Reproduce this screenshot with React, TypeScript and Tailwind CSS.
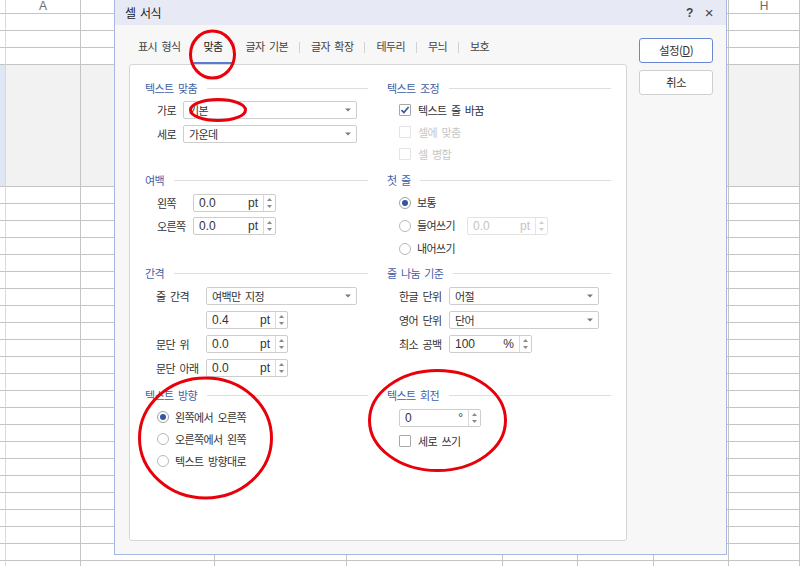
import React from "react";

type Row = { kind: "head" | "norm" | "gray" };

const rows: Row[] = [
  { kind: "head" },
  { kind: "norm" },
  { kind: "norm" },
  { kind: "norm" },
  { kind: "gray" },
  ...Array.from({ length: 23 }, () => ({ kind: "norm" as const })),
];

function Sheet() {
  return (
    <div className="flex flex-col">
      {rows.map((r, i) => (
        <div
          key={i}
          className={
            r.kind === "head"
              ? "grid grid-cols-[6px_75px_134px_132px_156px_75px_76px_75px_71px] h-[14px] shrink-0"
              : r.kind === "gray"
              ? "grid grid-cols-[6px_75px_134px_132px_156px_75px_76px_75px_71px] h-[122px] shrink-0"
              : "grid grid-cols-[6px_75px_134px_132px_156px_75px_76px_75px_71px] h-[17px] shrink-0"
          }
        >
          {Array.from({ length: 9 }, (_, c) => (
            <div
              key={c}
              className={
                (c === 0
                  ? "border-r border-b border-r-[#d9d9d9] border-b-[#c4c4c4] "
                  : "border-r border-b border-[#c4c4c4] ") +
                (r.kind === "gray"
                  ? c === 0
                    ? "bg-[#dfe6f6]"
                    : "bg-[#f2f2f2]"
                  : "bg-white") +
                " flex items-center justify-center"
              }
            >
              {r.kind === "head" && c === 1 && (
                <span className="text-[12px] leading-[13px] text-[#6b6b6b] tracking-normal [font-family:'Liberation_Sans',sans-serif]">
                  A
                </span>
              )}
              {r.kind === "head" && c === 8 && (
                <span className="text-[12px] leading-[13px] text-[#6b6b6b] tracking-normal [font-family:'Liberation_Sans',sans-serif]">
                  H
                </span>
              )}
            </div>
          ))}
        </div>
      ))}
    </div>
  );
}

function Caret() {
  return (
    <svg width="6" height="4" viewBox="0 0 6 4">
      <path d="M0 0.5h6L3 3.5z" fill="#7a7a7a" />
    </svg>
  );
}

function Select({ className, value }: { className: string; value: string }) {
  return (
    <div
      className={
        "h-[18px] border border-[#cdcdcd] rounded-[2px] bg-white flex items-center justify-between pl-[5px] pr-[5px] " +
        className
      }
    >
      <span className="text-[#333]">{value}</span>
      <Caret />
    </div>
  );
}

function Spin({
  className,
  value,
  unit,
  disabled,
}: {
  className: string;
  value: string;
  unit: string;
  disabled?: boolean;
}) {
  const col = disabled ? "#cfcfcf" : "#8a8a8a";
  return (
    <div
      className={
        (disabled ? "border-[#e3e3e3] " : "border-[#cdcdcd] ") +
        "flex h-[18px] border rounded-[2px] bg-white " +
        className
      }
    >
      <div
        className={
          (disabled ? "text-[#c4c4c4] " : "text-[#333] ") +
          "flex-1 flex items-center justify-between pl-[5px] pr-[5px] text-[12px] [font-family:'Liberation_Sans',sans-serif] tracking-normal"
        }
      >
        <span>{value}</span>
        <span>{unit}</span>
      </div>
      <div
        className={
          (disabled ? "border-[#e6e6e6] " : "border-[#dadada] ") +
          "w-[12px] border-l flex flex-col items-center justify-center gap-[4px]"
        }
      >
        <svg width="5" height="3" viewBox="0 0 5 3">
          <path d="M0 3h5L2.5 0z" fill={col} />
        </svg>
        <svg width="5" height="3" viewBox="0 0 5 3">
          <path d="M0 0h5L2.5 3z" fill={col} />
        </svg>
      </div>
    </div>
  );
}

function Header({ title }: { title: string }) {
  return (
    <div className="h-[16px] flex items-center">
      <span className="text-[#3f5ea8]">{title}</span>
      <div className="flex-1 h-px bg-[#dedede] ml-[10px]" />
    </div>
  );
}

function Check({ checked, disabled, label }: { checked?: boolean; disabled?: boolean; label: string }) {
  return (
    <div className="h-[22px] flex items-center pl-[12px]">
      <div
        className={
          (disabled ? "border-[#e4e4e4] " : "border-[#a8a8a8] ") +
          "w-[12px] h-[12px] border rounded-[1px] bg-white flex items-center justify-center"
        }
      >
        {checked && (
          <svg width="10" height="10" viewBox="0 0 10 10">
            <path d="M1.5 5.2l2.4 2.4L8.6 2" stroke="#3656a8" strokeWidth="1.7" fill="none" />
          </svg>
        )}
      </div>
      <span className={(disabled ? "text-[#c6c6c6] " : "text-[#333] ") + "ml-[7px]"}>{label}</span>
    </div>
  );
}

function Radio({ checked, label, children }: { checked?: boolean; label: string; children?: React.ReactNode }) {
  return (
    <div className="h-[23px] flex items-center pl-[12px]">
      <div
        className={
          (checked ? "border-[#a0a0a0] " : "border-[#b9b9b9] ") +
          "w-[12px] h-[12px] border rounded-full bg-white flex items-center justify-center"
        }
      >
        {checked && <div className="w-[6px] h-[6px] rounded-full bg-[#3554a4]" />}
      </div>
      <span className="ml-[6px] text-[#333]">{label}</span>
      {children}
    </div>
  );
}

function Label({ className, text }: { className: string; text: string }) {
  return <span className={"text-[#333] " + className}>{text}</span>;
}

const tabs = ["표시 형식", "맞춤", "글자 기본", "글자 확장", "테두리", "무늬", "보호"];

function Dialog() {
  return (
    <div className="absolute left-[114px] top-0 w-[613px] h-[555px] border border-[#a9b8e2] border-t-0 bg-[#f7f7f7] flex flex-col">
      <div className="h-[25px] bg-[#e7e9f5] flex items-center pl-[10px] pr-[13px] shrink-0">
        <span className="text-[12px] text-[#222]">셀 서식</span>
        <div className="flex-1" />
        <span className="text-[12px] font-bold text-[#444] [font-family:'Liberation_Sans',sans-serif]">?</span>
        <span className="ml-[12px] text-[15px] leading-none text-[#444] [font-family:'Liberation_Sans',sans-serif]">×</span>
      </div>
      <div className="flex">
        <div className="ml-[14px] w-[498px] flex flex-col">
          <div className="mt-[10px] h-[29px] flex items-stretch -ml-[2px]">
            {tabs.map((t, i) => (
              <React.Fragment key={t}>
                {i > 0 && <div className="w-px h-[11px] bg-[#d2d2d2] self-center -mt-[4px]" />}
                <div
                  className={
                    (i === 1
                      ? "border-b-2 border-[#5b7ad2] text-[#222] "
                      : "border-b-2 border-transparent text-[#444] ") +
                    "px-[11px] pb-[4px] flex items-center"
                  }
                >
                  {t}
                </div>
              </React.Fragment>
            ))}
          </div>
          <div className="h-[477px] border border-[#d6d6d6] rounded-[3px] bg-white pt-[15px] pl-[15px]">
            {/* block 1 */}
            <div className="grid grid-cols-[223px_224px] gap-x-[19px] h-[92px]">
              <div className="flex flex-col">
                <Header title="텍스트 맞춤" />
                <div className="mt-[5px] flex items-center pl-[12px]">
                  <Label className="w-[26px]" text="가로" />
                  <Select className="w-[174px]" value="기본" />
                </div>
                <div className="mt-[6px] flex items-center pl-[12px]">
                  <Label className="w-[26px]" text="세로" />
                  <Select className="w-[174px]" value="가운데" />
                </div>
              </div>
              <div className="flex flex-col">
                <Header title="텍스트 조정" />
                <div className="mt-[3px]" />
                <Check checked label="텍스트 줄 바꿈" />
                <Check disabled label="셀에 맞춤" />
                <Check disabled label="셀 병합" />
              </div>
            </div>
            {/* block 2 */}
            <div className="grid grid-cols-[223px_224px] gap-x-[19px] h-[93px]">
              <div className="flex flex-col">
                <Header title="여백" />
                <div className="mt-[6px] flex items-center pl-[12px]">
                  <Label className="w-[36px]" text="왼쪽" />
                  <Spin className="w-[83px]" value="0.0" unit="pt" />
                </div>
                <div className="mt-[5px] flex items-center pl-[12px]">
                  <Label className="w-[36px]" text="오른쪽" />
                  <Spin className="w-[83px]" value="0.0" unit="pt" />
                </div>
              </div>
              <div className="flex flex-col">
                <Header title="첫 줄" />
                <div className="mt-[3px]" />
                <Radio checked label="보통" />
                <Radio label="들여쓰기">
                  <div className="ml-auto mr-[63px]">
                    <Spin className="w-[81px]" value="0.0" unit="pt" disabled />
                  </div>
                </Radio>
                <Radio label="내어쓰기" />
              </div>
            </div>
            {/* block 3 */}
            <div className="grid grid-cols-[223px_224px] gap-x-[19px] h-[122px]">
              <div className="flex flex-col">
                <Header title="간격" />
                <div className="mt-[6px] flex items-center pl-[11px]">
                  <Label className="w-[50px]" text="줄 간격" />
                  <Select className="w-[151px]" value="여백만 지정" />
                </div>
                <div className="mt-[6px] flex items-center pl-[61px]">
                  <Spin className="w-[82px]" value="0.4" unit="pt" />
                </div>
                <div className="mt-[6px] flex items-center pl-[11px]">
                  <Label className="w-[50px]" text="문단 위" />
                  <Spin className="w-[82px]" value="0.0" unit="pt" />
                </div>
                <div className="mt-[6px] flex items-center pl-[11px]">
                  <Label className="w-[50px] whitespace-nowrap" text="문단 아래" />
                  <Spin className="w-[82px]" value="0.0" unit="pt" />
                </div>
              </div>
              <div className="flex flex-col">
                <Header title="줄 나눔 기준" />
                <div className="mt-[6px] flex items-center pl-[12px]">
                  <Label className="w-[50px]" text="한글 단위" />
                  <Select className="w-[150px]" value="어절" />
                </div>
                <div className="mt-[6px] flex items-center pl-[12px]">
                  <Label className="w-[50px]" text="영어 단위" />
                  <Select className="w-[150px]" value="단어" />
                </div>
                <div className="mt-[6px] flex items-center pl-[12px]">
                  <Label className="w-[50px]" text="최소 공백" />
                  <Spin className="w-[83px]" value="100" unit="%" />
                </div>
              </div>
            </div>
            {/* block 4 */}
            <div className="grid grid-cols-[223px_224px] gap-x-[19px]">
              <div className="flex flex-col">
                <Header title="텍스트 방향" />
                <div className="mt-[3px]" />
                <div className="flex flex-col [&>div]:h-[22px]">
                  <Radio checked label="왼쪽에서 오른쪽" />
                  <Radio label="오른쪽에서 왼쪽" />
                  <Radio label="텍스트 방향대로" />
                </div>
              </div>
              <div className="flex flex-col">
                <Header title="텍스트 회전" />
                <div className="mt-[6px] pl-[12px]">
                  <Spin className="w-[82px]" value="0" unit="°" />
                </div>
                <div className="mt-[3px]" />
                <Check label="세로 쓰기" />
              </div>
            </div>
          </div>
        </div>
        <div className="ml-[12px] w-[74px] flex flex-col">
          <div className="mt-[13px] h-[25px] border-[1.5px] border-[#6a86d6] rounded-[3px] bg-white flex items-center justify-center text-[#333] text-[11.5px]">
            설정(<span className="underline">D</span>)
          </div>
          <div className="mt-[7px] h-[25px] border border-[#cfcfcf] rounded-[3px] bg-white flex items-center justify-center text-[#333] text-[11.5px]">
            취소
          </div>
        </div>
      </div>
    </div>
  );
}

export default function App() {
  return (
    <div className="relative w-[800px] h-[566px] overflow-hidden bg-white text-[11px] tracking-[-0.6px] [word-spacing:2.5px] [font-family:'Noto_Sans_CJK_KR','Noto_Sans',sans-serif]">
      <Sheet />
      <Dialog />
      <svg className="absolute inset-0 pointer-events-none" width="800" height="566" viewBox="0 0 800 566">
        <g fill="none" stroke="#e8000b" strokeWidth="3">
          <ellipse cx="212.5" cy="54.5" rx="22" ry="23.5" />
          <ellipse cx="218" cy="110" rx="27.5" ry="10.5" />
          <ellipse cx="205.5" cy="438" rx="66" ry="60" />
          <ellipse cx="437.5" cy="420.5" rx="68" ry="50" />
        </g>
      </svg>
    </div>
  );
}
